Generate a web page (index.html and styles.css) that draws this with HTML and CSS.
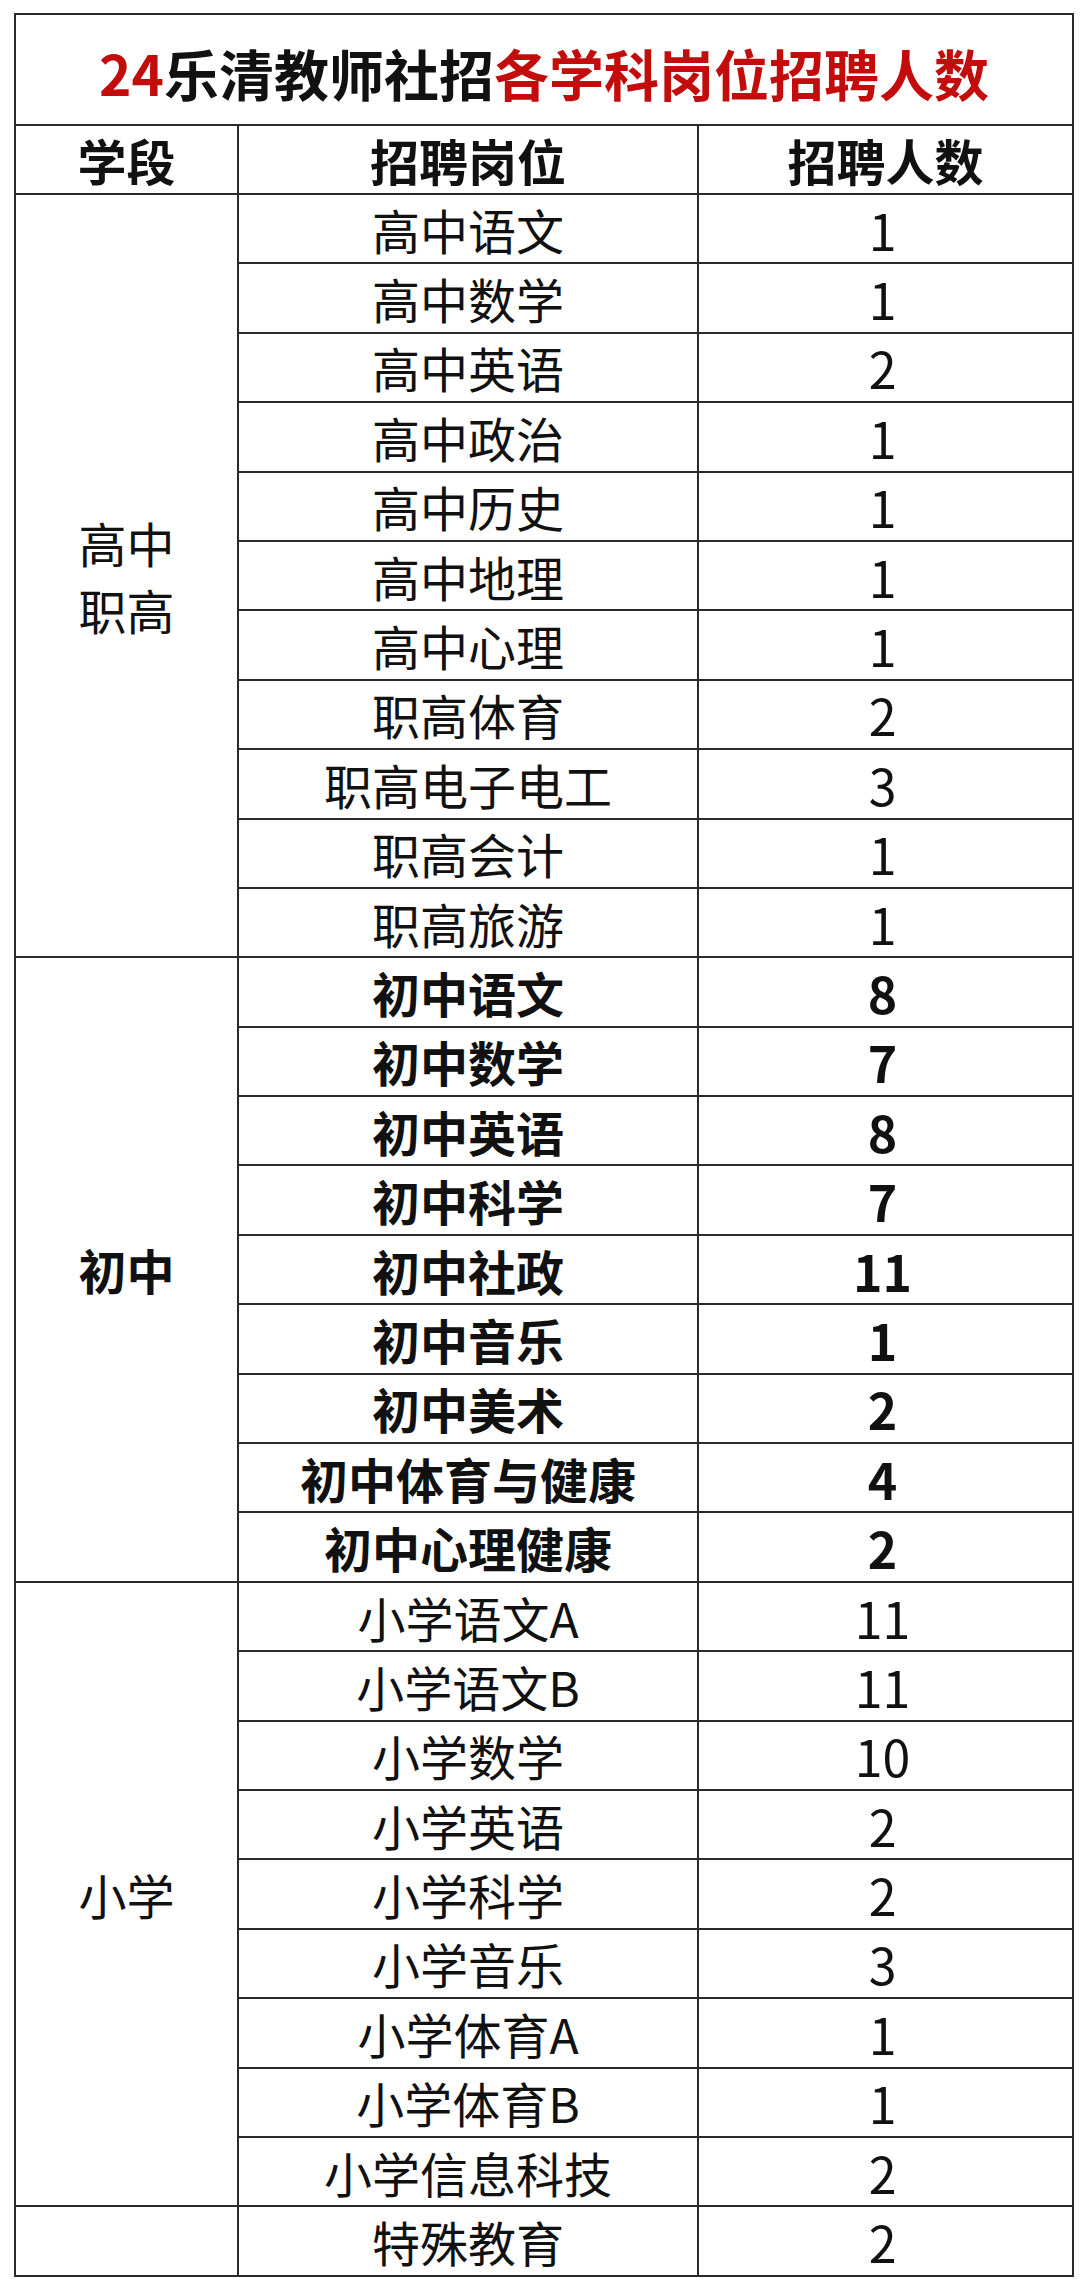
FILE: index.html
```html
<!DOCTYPE html>
<html lang="zh-CN">
<head>
<meta charset="utf-8">
<title>24乐清教师社招各学科岗位招聘人数</title>
<link rel="stylesheet" href="styles.css">
</head>
<body>
<table class="sheet">
  <colgroup>
    <col class="c-stage">
    <col class="c-post">
    <col class="c-num">
  </colgroup>
  <tr class="title-row">
    <td colspan="3" class="title"><span class="red">24</span>乐清教师社招<span class="red">各学科岗位招聘人数</span></td>
  </tr>
  <tr class="head-row">
    <th>学段</th><th>招聘岗位</th><th>招聘人数</th>
  </tr>
  <tr><td rowspan="11" class="stage">高中<br>职高</td><td>高中语文</td><td class="num">1</td></tr>
  <tr><td>高中数学</td><td class="num">1</td></tr>
  <tr><td>高中英语</td><td class="num">2</td></tr>
  <tr><td>高中政治</td><td class="num">1</td></tr>
  <tr><td>高中历史</td><td class="num">1</td></tr>
  <tr><td>高中地理</td><td class="num">1</td></tr>
  <tr><td>高中心理</td><td class="num">1</td></tr>
  <tr><td>职高体育</td><td class="num">2</td></tr>
  <tr><td>职高电子电工</td><td class="num">3</td></tr>
  <tr><td>职高会计</td><td class="num">1</td></tr>
  <tr><td>职高旅游</td><td class="num">1</td></tr>
  <tr class="bold"><td rowspan="9" class="stage">初中</td><td>初中语文</td><td class="num">8</td></tr>
  <tr class="bold"><td>初中数学</td><td class="num">7</td></tr>
  <tr class="bold"><td>初中英语</td><td class="num">8</td></tr>
  <tr class="bold"><td>初中科学</td><td class="num">7</td></tr>
  <tr class="bold"><td>初中社政</td><td class="num">11</td></tr>
  <tr class="bold"><td>初中音乐</td><td class="num">1</td></tr>
  <tr class="bold"><td>初中美术</td><td class="num">2</td></tr>
  <tr class="bold"><td>初中体育与健康</td><td class="num">4</td></tr>
  <tr class="bold"><td>初中心理健康</td><td class="num">2</td></tr>
  <tr><td rowspan="9" class="stage">小学</td><td>小学语文A</td><td class="num">11</td></tr>
  <tr><td>小学语文B</td><td class="num">11</td></tr>
  <tr><td>小学数学</td><td class="num">10</td></tr>
  <tr><td>小学英语</td><td class="num">2</td></tr>
  <tr><td>小学科学</td><td class="num">2</td></tr>
  <tr><td>小学音乐</td><td class="num">3</td></tr>
  <tr><td>小学体育A</td><td class="num">1</td></tr>
  <tr><td>小学体育B</td><td class="num">1</td></tr>
  <tr><td>小学信息科技</td><td class="num">2</td></tr>
  <tr><td class="stage"></td><td>特殊教育</td><td class="num">2</td></tr>
</table>
</body>
</html>
```

FILE: styles.css
```css
html, body {
  margin: 0;
  padding: 0;
  background: #ffffff;
}
body {
  padding: 13px 0 0 14px;
  font-family: "Noto Sans CJK SC", "Microsoft YaHei", "Noto Sans", sans-serif;
  color: #111111;
}
.sheet {
  border-collapse: collapse;
  width: 1058px;
  table-layout: fixed;
  border: 2px solid #222222;
}
.c-stage { width: 223px; }
.c-post { width: 460px; }
.c-num { width: 375px; }
.sheet td, .sheet th {
  border: 2px solid #2a2a2a;
  padding: 0;
  text-align: center;
  vertical-align: middle;
  font-size: 48px;
  line-height: 1;
  font-weight: 400;
  white-space: nowrap;
}
.sheet tr {
  height: 69.4px;
}
.sheet .title-row {
  height: 111px;
}
.sheet .title {
  font-size: 55px;
  font-weight: 700;
  color: #111111;
  padding-top: 6px;
}
.red {
  color: #c30d0d;
}
.sheet .head-row {
  height: 69px;
}
.sheet th {
  font-size: 49px;
  font-weight: 700;
}
.sheet .stage {
  line-height: 67px;
}
.sheet .num {
  font-size: 50px;
  padding-right: 6px;
}
.sheet .bold td {
  font-weight: 700;
}
```
